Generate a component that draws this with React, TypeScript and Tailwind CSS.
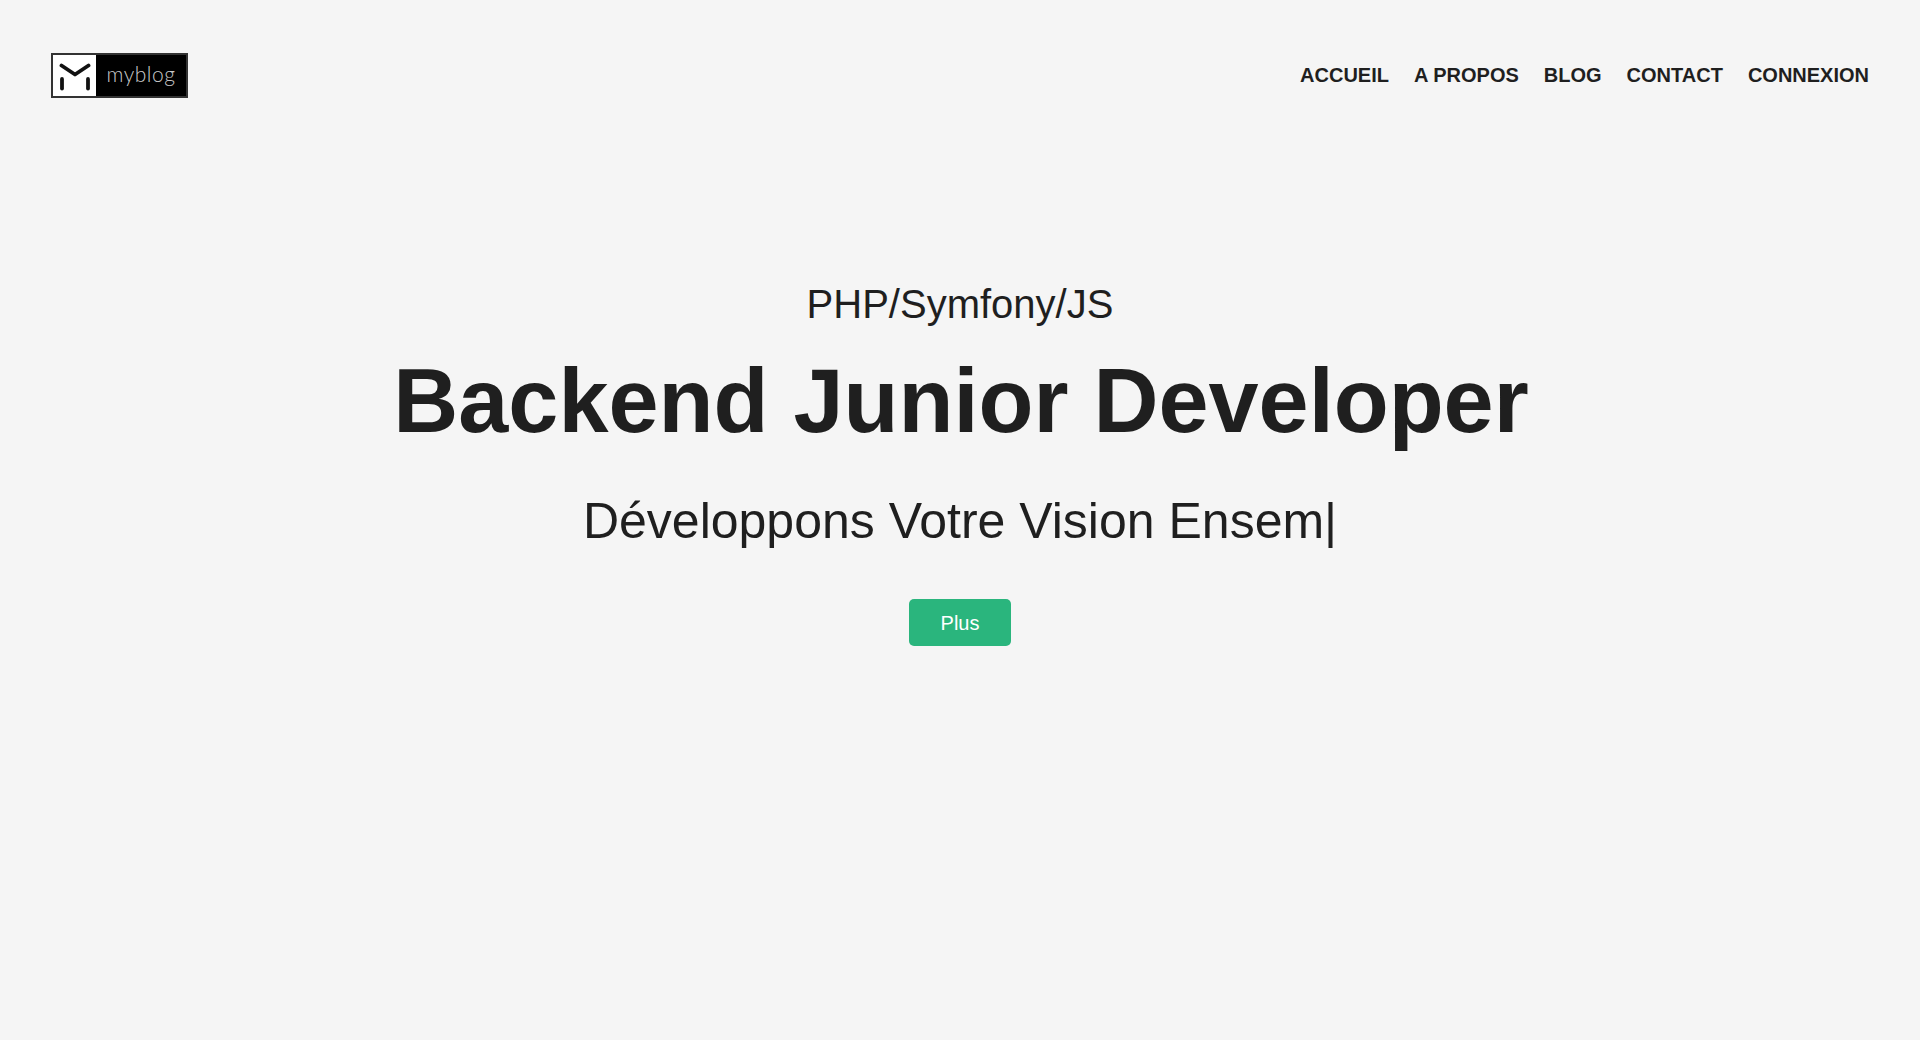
import React from 'react';

const links = ['ACCUEIL', 'A PROPOS', 'BLOG', 'CONTACT', 'CONNEXION'];

const Logo: React.FC = () => (
  <div className="flex h-[45px] w-[137px] border-2 border-[#333] bg-black">
    <div className="flex w-[43px] items-center justify-center bg-white">
      <svg width="32" height="30" viewBox="0 0 32 30" fill="none" stroke="#111" strokeWidth="3.8" strokeLinecap="round" strokeLinejoin="round">
        <path d="M2.5 4.5 L16 13.5 L29.5 4.5" />
        <path d="M3 18 V27.5" />
        <path d="M29 18 V27.5" />
      </svg>
    </div>
    <div className="flex flex-1 items-center justify-center pb-[3px] text-[21px] font-light tracking-[0.5px] text-[#c8c8c8] font-['Lato',sans-serif]">
      myblog
    </div>
  </div>
);

const App: React.FC = () => {
  return (
    <div className="min-h-[1040px] bg-[#f5f5f5] font-['Liberation_Sans',Arial,sans-serif] text-[#1f1f1f]">
      <header className="flex items-center justify-between pl-[51px] pr-[51px] pt-[53px]">
        <Logo />
        <nav className="flex gap-[25px] pb-[2px]">
          {links.map(l => (
            <a key={l} href="#" className="text-[20px] font-bold text-[#1f1f1f]">
              {l}
            </a>
          ))}
        </nav>
      </header>

      <main className="flex flex-col items-center pt-[182px] text-center">
        <h2 className="text-[40px] leading-[48px]">PHP/Symfony/JS</h2>
        <h1 className="mt-[19px] pl-[2px] text-[90px] font-bold leading-[108px]">Backend Junior Developer</h1>
        <p className="mt-[36px] text-[50px] leading-[60px]">Développons Votre Vision Ensem|</p>
        <button className="mt-[48px] h-[47px] w-[102px] rounded-[5px] bg-[#2ab57d] text-[20px] text-white">Plus</button>
      </main>
    </div>
  );
};

export default App;
